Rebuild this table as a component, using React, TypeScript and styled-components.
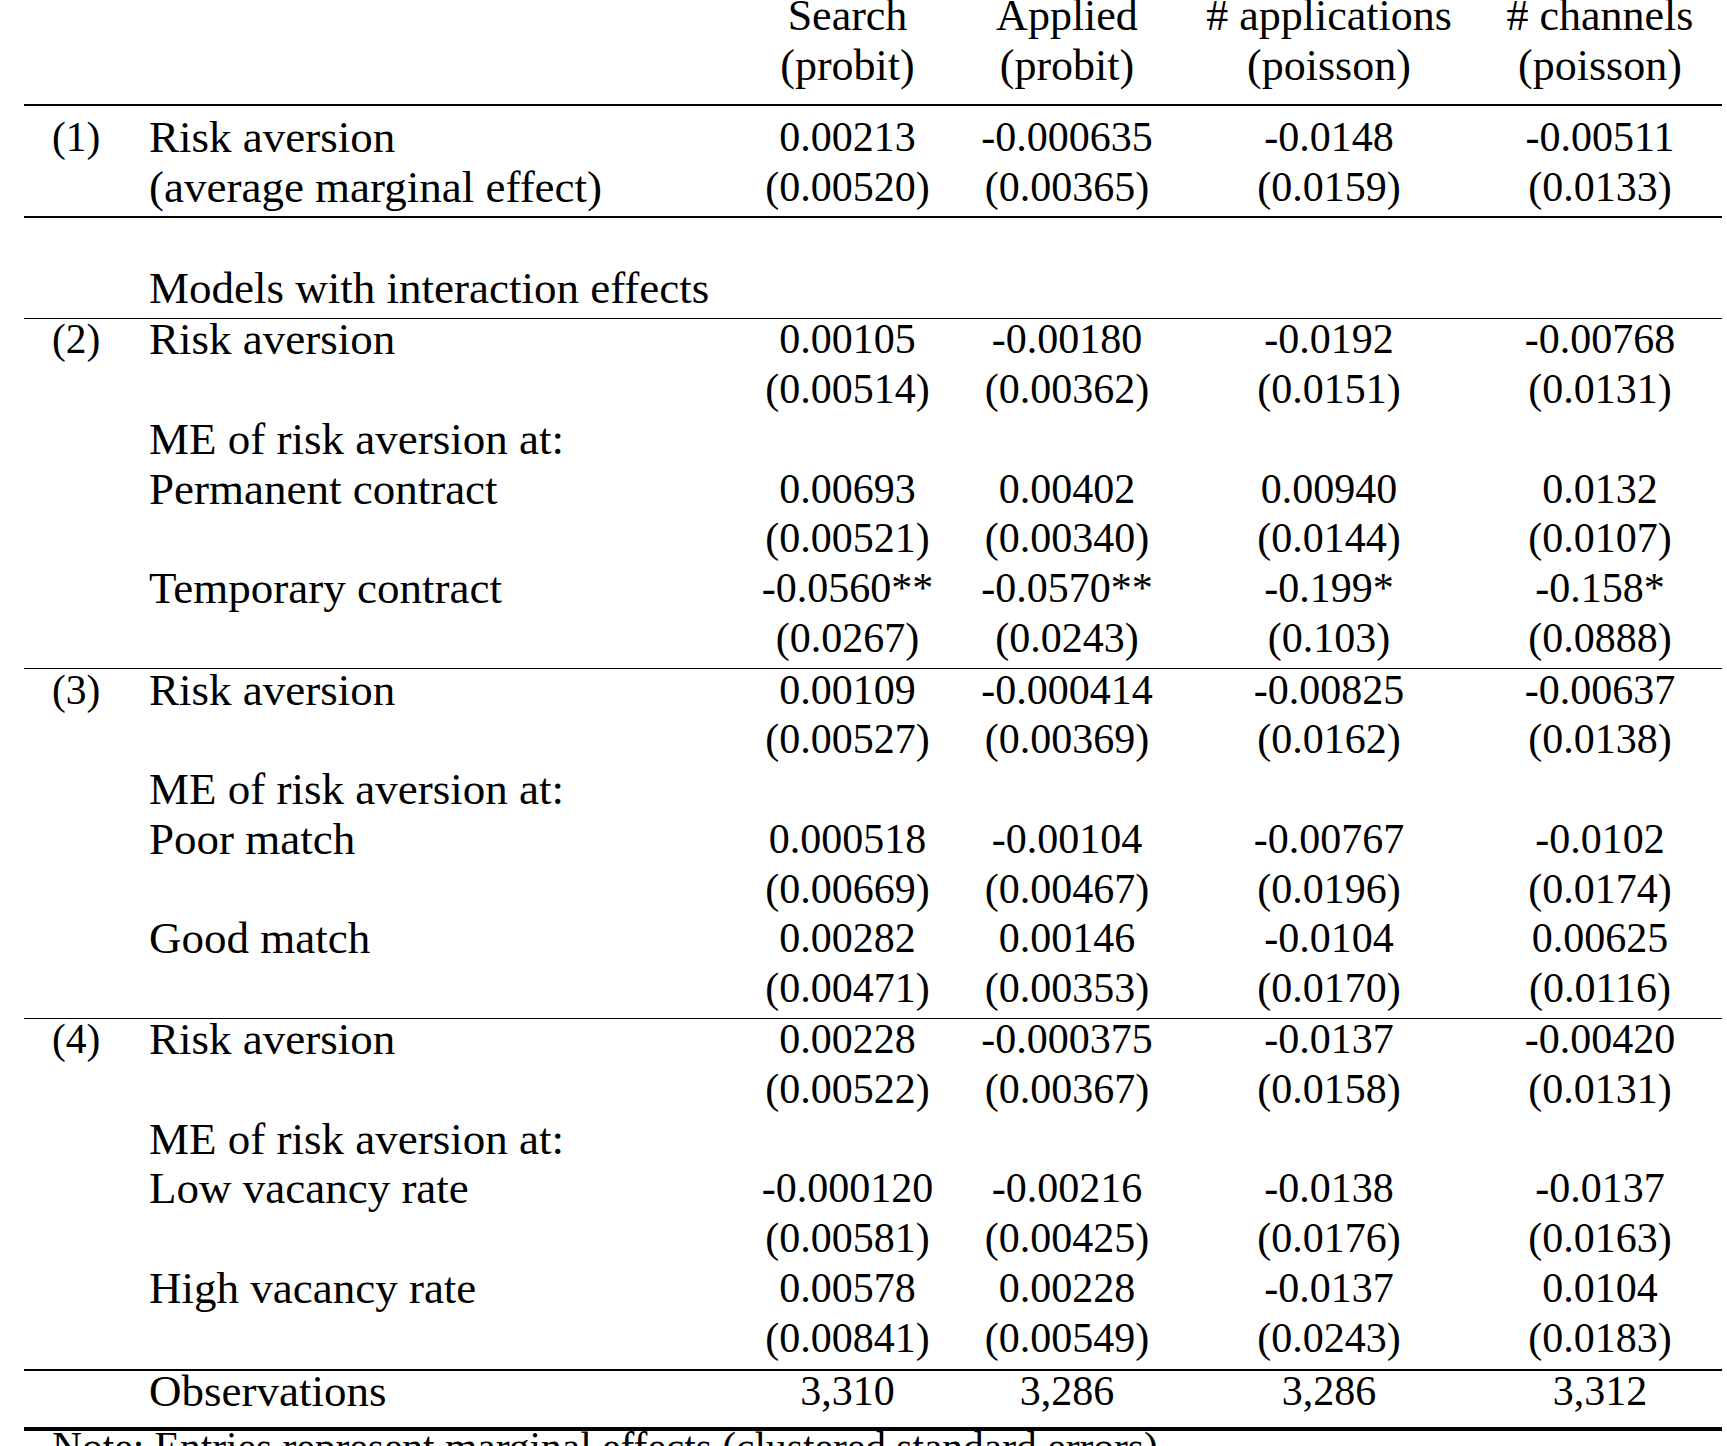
import React from "react";
import styled, { createGlobalStyle } from "styled-components";

const GlobalStyle = createGlobalStyle`
  html, body {
    margin: 0;
    padding: 0;
    background: #fff;
    overflow: hidden;
  }
  body {
    font-family: "Liberation Serif", "Times New Roman", serif;
    color: #000;
  }
`;

const Table = styled.div`
  width: 1698px;
  margin-left: 24px;
  margin-top: -8.6px;
`;

const Row = styled.div`
  display: grid;
  grid-template-columns: 125px 592px 213px 226px 298px 244px;
  height: 49.75px;
  line-height: 49.75px;
  white-space: nowrap;
`;

const Num = styled.div`
  padding-left: 28px;
  font-size: 41.5px;
`;

const Label = styled.div`
  font-size: 45px;
`;

const Value = styled.div<{ $head?: boolean }>`
  text-align: center;
  font-size: ${(p) => (p.$head ? 44 : 42)}px;
`;

const Rule = styled.div<{ $w: number; $above: number; $below: number }>`
  height: ${(p) => p.$w}px;
  background: #000;
  margin-top: ${(p) => p.$above}px;
  margin-bottom: ${(p) => p.$below}px;
`;

const Note = styled.div`
  font-size: 41.5px;
  line-height: 49.75px;
  padding-left: 28px;
  white-space: nowrap;
`;

type Line = { num?: string; label?: string; vals?: string[] };

const Lines = ({ rows }: { rows: Line[] }) => (
  <>
    {rows.map((r, i) => (
      <Row key={i}>
        <Num>{r.num}</Num>
        <Label>{r.label}</Label>
        {(r.vals || ["", "", "", ""]).map((v, j) => (
          <Value key={j}>{v}</Value>
        ))}
      </Row>
    ))}
  </>
);

const me = "ME of risk aversion at:";

const section1: Line[] = [
  { num: "(1)", label: "Risk aversion", vals: ["0.00213", "-0.000635", "-0.0148", "-0.00511"] },
  { label: "(average marginal effect)", vals: ["(0.00520)", "(0.00365)", "(0.0159)", "(0.0133)"] },
];

const section2: Line[] = [
  { num: "(2)", label: "Risk aversion", vals: ["0.00105", "-0.00180", "-0.0192", "-0.00768"] },
  { vals: ["(0.00514)", "(0.00362)", "(0.0151)", "(0.0131)"] },
  { label: me },
  { label: "Permanent contract", vals: ["0.00693", "0.00402", "0.00940", "0.0132"] },
  { vals: ["(0.00521)", "(0.00340)", "(0.0144)", "(0.0107)"] },
  { label: "Temporary contract", vals: ["-0.0560**", "-0.0570**", "-0.199*", "-0.158*"] },
  { vals: ["(0.0267)", "(0.0243)", "(0.103)", "(0.0888)"] },
];

const section3: Line[] = [
  { num: "(3)", label: "Risk aversion", vals: ["0.00109", "-0.000414", "-0.00825", "-0.00637"] },
  { vals: ["(0.00527)", "(0.00369)", "(0.0162)", "(0.0138)"] },
  { label: me },
  { label: "Poor match", vals: ["0.000518", "-0.00104", "-0.00767", "-0.0102"] },
  { vals: ["(0.00669)", "(0.00467)", "(0.0196)", "(0.0174)"] },
  { label: "Good match", vals: ["0.00282", "0.00146", "-0.0104", "0.00625"] },
  { vals: ["(0.00471)", "(0.00353)", "(0.0170)", "(0.0116)"] },
];

const section4: Line[] = [
  { num: "(4)", label: "Risk aversion", vals: ["0.00228", "-0.000375", "-0.0137", "-0.00420"] },
  { vals: ["(0.00522)", "(0.00367)", "(0.0158)", "(0.0131)"] },
  { label: me },
  { label: "Low vacancy rate", vals: ["-0.000120", "-0.00216", "-0.0138", "-0.0137"] },
  { vals: ["(0.00581)", "(0.00425)", "(0.0176)", "(0.0163)"] },
  { label: "High vacancy rate", vals: ["0.00578", "0.00228", "-0.0137", "0.0104"] },
  { vals: ["(0.00841)", "(0.00549)", "(0.0243)", "(0.0183)"] },
];

export default function App() {
  return (
    <>
      <GlobalStyle />
      <Table>
        <Row>
          <Num />
          <Label />
          <Value $head>Search</Value>
          <Value $head>Applied</Value>
          <Value $head># applications</Value>
          <Value $head># channels</Value>
        </Row>
        <Row>
          <Num />
          <Label />
          <Value $head>(probit)</Value>
          <Value $head>(probit)</Value>
          <Value $head>(poisson)</Value>
          <Value $head>(poisson)</Value>
        </Row>
        <Rule $w={2} $above={12.7} $below={7.25} />
        <Lines rows={section1} />
        <Rule $w={2} $above={3.65} $below={45.75} />
        <Lines rows={[{ label: "Models with interaction effects" }]} />
        <Rule $w={1.3} $above={4.15} $below={-3.5} />
        <Lines rows={section2} />
        <Rule $w={1.3} $above={4.15} $below={-3.45} />
        <Lines rows={section3} />
        <Rule $w={1.3} $above={4.2} $below={-4.2} />
        <Lines rows={section4} />
        <Rule $w={1.3} $above={5.8} $below={-3.55} />
        <Lines rows={[{ label: "Observations", vals: ["3,310", "3,286", "3,286", "3,312"] }]} />
        <Rule $w={3.4} $above={10.45} $below={-7.7} />
        <Note>Note: Entries represent marginal effects (clustered standard errors).</Note>
      </Table>
    </>
  );
}
